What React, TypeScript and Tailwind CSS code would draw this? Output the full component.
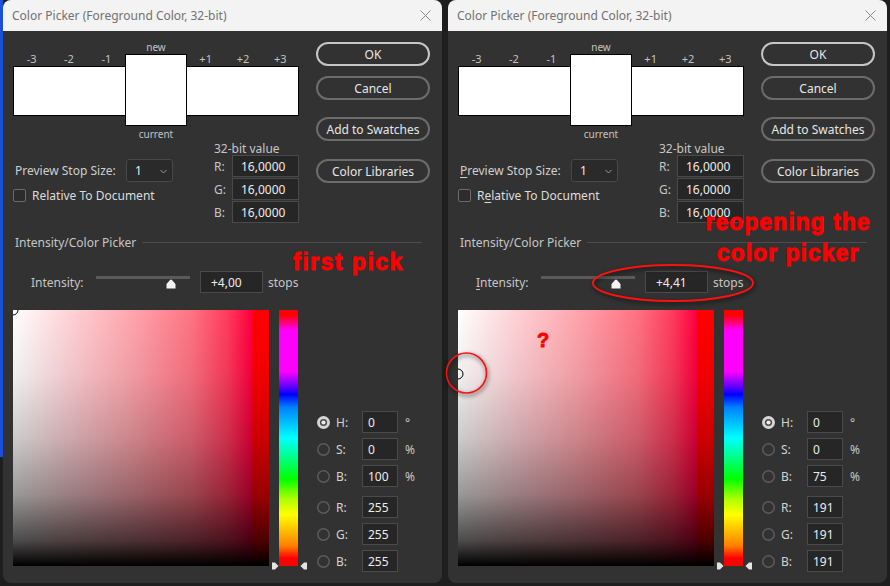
import type { ReactNode } from "react";

type PickerProps = {
  intensity: string;
  brightness: number;
  rgb: string;
  mnemonics?: boolean;
};

const ui = "font-['Noto_Sans',sans-serif]";

function Key({ on, children }: { on?: boolean; children: ReactNode }) {
  if (!on) return <>{children}</>;
  return <span className="underline underline-offset-[2px]">{children}</span>;
}

function ValueBox({ value, className = "" }: { value: string; className?: string }) {
  return (
    <div
      className={`flex h-[22px] items-center border border-[#4a4a4a] bg-[#262626] pl-[5px] pt-[1px] text-[12px] text-[#ececec] ${className}`}
    >
      {value}
    </div>
  );
}

function PillButton({ label, primary, className = "" }: { label: string; primary?: boolean; className?: string }) {
  return (
    <div
      className={`flex h-[24px] items-center justify-center rounded-full border-2 pt-[1px] text-[12px] text-[#e6e6e6] ${
        primary ? "border-[#c6c6c6]" : "border-[#6c6c6c]"
      } ${className}`}
    >
      {label}
    </div>
  );
}

function Radio({ checked }: { checked?: boolean }) {
  return (
    <svg width="13" height="13" viewBox="0 0 13 13" className="shrink-0">
      {checked ? (
        <>
          <circle cx="6.5" cy="6.5" r="6.5" fill="#d6d6d6" />
          <circle cx="6.5" cy="6.5" r="3.6" fill="#4a4a4a" />
          <circle cx="6.5" cy="6.5" r="2.1" fill="#ececec" />
        </>
      ) : (
        <circle cx="6.5" cy="6.5" r="5.75" fill="none" stroke="#5c5c5c" strokeWidth="1.5" />
      )}
    </svg>
  );
}

function Swatch({ side }: { side: "left" | "right" }) {
  const labels = side === "left" ? ["-3", "-2", "-1"] : ["+1", "+2", "+3"];
  return (
    <div className="mt-[12px] w-[112px]">
      <div className="grid h-[14px] grid-cols-3 text-center text-[11px] leading-[14px] text-[#c2c2c2]">
        {labels.map((l) => (
          <span key={l}>{l}</span>
        ))}
      </div>
      <div
        className={`h-[50px] border border-black bg-white ${side === "left" ? "border-r-0" : "border-l-0"}`}
      />
    </div>
  );
}

function ColorPicker({ intensity, brightness, rgb, mnemonics }: PickerProps) {
  const cursorTop = ((100 - brightness) / 100) * 256;
  const rows = [
    { k: "H", v: "0", u: "°", on: true, gap: "mt-0" },
    { k: "S", v: "0", u: "%", gap: "mt-[5px]" },
    { k: "B", v: String(brightness), u: "%", gap: "mt-[5px]" },
    { k: "R", v: rgb, gap: "mt-[9px]" },
    { k: "G", v: rgb, gap: "mt-[5px]" },
    { k: "B", v: rgb, gap: "mt-[5px]" },
  ];

  return (
    <div className="flex h-[583px] w-[439px] flex-col overflow-hidden rounded-[8px] bg-[#323232]">
      {/* window chrome */}
      <div className="flex h-[31px] shrink-0 items-center justify-between bg-[#f3f3f3] pl-[9px] pr-[11px]">
        <span className="text-[12px] text-[#727272]">Color Picker (Foreground Color, 32-bit)</span>
        <svg width="11" height="11" viewBox="0 0 11 11">
          <path d="M0.5 0.5 L10.5 10.5 M10.5 0.5 L0.5 10.5" stroke="#8a8a8a" strokeWidth="1" />
        </svg>
      </div>

      <div className="flex flex-1 flex-col">
        <div className="flex pl-[10px]">
          <div className="w-[286px] pt-[9px]">
            {/* new / current preview strip */}
            <div className="flex items-start">
              <Swatch side="left" />
              <div className="w-[62px] text-center">
                <div className="h-[14px] text-[10px] leading-[14px] text-[#c2c2c2]">new</div>
                <div className="h-[72px] border border-black bg-white" />
                <div className="mt-[1px] h-[14px] text-[10px] leading-[14px] text-[#c2c2c2]">current</div>
              </div>
              <Swatch side="right" />
            </div>

            <div className="flex">
              <div className="w-[199px] pt-[18px]">
                <div className="flex h-[23px] items-center">
                  <span className="w-[113px] pl-[2px] pt-[1px] text-[12px] text-[#cfcfcf]">
                    <Key on={mnemonics}>P</Key>review Stop Size:
                  </span>
                  <div className="flex h-[23px] w-[47px] items-center justify-between rounded-[3px] border border-[#484848] bg-[#2a2a2a] pl-[8px] pr-[5px] pt-[1px] text-[12px] text-[#ececec]">
                    1
                    <svg width="7" height="5" viewBox="0 0 7 5">
                      <path d="M0.5 1 L3.5 4 L6.5 1" fill="none" stroke="#9a9a9a" strokeWidth="1" />
                    </svg>
                  </div>
                </div>
                <div className="mt-[7px] flex h-[13px] items-center">
                  <div className="h-[13px] w-[13px] rounded-[2px] border border-[#6a6a6a] bg-[#2c2c2c]" />
                  <span className="ml-[6px] pt-[1px] text-[12px] text-[#dcdcdc]">
                    R<Key on={mnemonics}>e</Key>lative To Document
                  </span>
                </div>
              </div>

              <div className="w-[87px]">
                <div className="h-[14px] pl-[2px] pt-[1px] text-[12px] leading-[14px] text-[#c6c6c6]">32-bit value</div>
                {["R", "G", "B"].map((c, i) => (
                  <div key={c} className={`flex items-center ${i ? "mt-[1px]" : ""}`}>
                    <span className="w-[20px] pl-[2px] pt-[1px] text-[12px] text-[#c6c6c6]">{c}:</span>
                    <ValueBox value="16,0000" className="w-[67px] pl-[8px]" />
                  </div>
                ))}
              </div>
            </div>
          </div>

          <div className="ml-[17px] flex w-[114px] flex-col pt-[11px]">
            <PillButton label="OK" primary />
            <PillButton label="Cancel" className="mt-[10px]" />
            <PillButton label="Add to Swatches" className="mt-[17px]" />
            <PillButton label="Color Libraries" className="mt-[18px]" />
          </div>
        </div>

        <div className="mt-[12px] flex h-[14px] items-center pl-[12px] pr-[20px]">
          <span className="pt-[1px] text-[12px] text-[#c6c6c6]">Intensity/Color Picker</span>
          <div className="ml-[6px] h-px flex-1 bg-[#4c4c4c]" />
        </div>

        <div className="mt-[22px] flex h-[22px] items-center pl-[28px]">
          <span className="w-[65px] pt-[1px] text-[12px] text-[#c6c6c6]">
            <Key on={mnemonics}>I</Key>ntensity:
          </span>
          <div className="relative h-[22px] w-[94px]">
            <div className="absolute left-0 right-0 top-[5px] h-[3px] bg-[#5a5a5a]" />
            <svg
              width="10"
              height="10"
              viewBox="0 0 10 10"
              className="absolute left-[70px] top-[8px]"
            >
              <path d="M5 0.5 Q5.6 0.5 6.2 1.3 L9.5 5 V9.5 H0.5 V5 L3.8 1.3 Q4.4 0.5 5 0.5 Z" fill="#f2f2f2" />
            </svg>
          </div>
          <ValueBox value={intensity} className="ml-[10px] w-[63px] pl-[10px]" />
          <span className="ml-[5px] pt-[1px] text-[12px] text-[#c6c6c6]">stops</span>
        </div>

        <div className="mt-[17px] flex items-start pl-[10px]">
          {/* saturation / brightness field for hue 0 */}
          <div className="relative h-[256px] w-[256px] overflow-hidden bg-[linear-gradient(to_right,#ffffff_0%,#ffd6da_20%,#ffa6ae_46%,#ff7282_70%,#ff3a5c_84%,#ff0040_93%,#ff0000_94%,#ff0000_100%)]">
            <div className="absolute inset-0 bg-[linear-gradient(to_bottom,#00000000_0%,#0000000f_25%,#00000033_50%,#00000066_72%,#000000b3_90%,#000000_100%)]" />
            <div
              className="absolute left-0 h-[11px] w-[11px] -translate-x-1/2 -translate-y-1/2 rounded-full border border-black"
              style={{ top: cursorTop }}
            />
          </div>

          <div className="relative ml-[10px] h-[256px] w-[19px] bg-[linear-gradient(to_bottom,#ff0000_0%,#ff0000_2%,#ff00ff_8%,#ff00ff_24%,#6000ff_30%,#0000ff_33%,#0080ff_38%,#00ffff_50%,#00ff80_58%,#00ff00_66%,#b0ff00_74%,#ffff00_80%,#ff8000_92%,#ff0000_97%,#ff0000_100%)]">
            <svg width="7" height="8" viewBox="0 0 7 8" className="absolute -left-[7px] bottom-[-4px]">
              <path d="M0 0.5 H3 L6.5 4 L3 7.5 H0 Z" fill="#e4e4e4" />
            </svg>
            <svg width="7" height="8" viewBox="0 0 7 8" className="absolute -right-[9px] bottom-[-4px]">
              <path d="M7 0.5 H4 L0.5 4 L4 7.5 H7 Z" fill="#e4e4e4" />
            </svg>
          </div>

          <div className="ml-[19px] mt-[101px] flex flex-col">
            {rows.map((r, i) => (
              <div key={i} className={`flex h-[22px] items-center ${r.gap}`}>
                <Radio checked={r.on} />
                <span className="ml-[6px] w-[26px] pt-[1px] text-[12px] text-[#d2d2d2]">{r.k}:</span>
                <ValueBox value={r.v} className="w-[36px]" />
                {r.u && <span className="ml-[7px] pt-[1px] text-[12px] text-[#c6c6c6]">{r.u}</span>}
              </div>
            ))}
          </div>
        </div>
      </div>
    </div>
  );
}

export default function App() {
  const note =
    "font-['Liberation_Sans',Arial,sans-serif] font-bold text-[#ff0000] [-webkit-text-stroke:0.9px_#ff0000]";
  return (
    <div className={`relative flex h-[586px] w-[890px] overflow-hidden bg-[#1e1e1e] ${ui}`}>
      <div className="h-full w-[3px] shrink-0 bg-[linear-gradient(to_bottom,#1b4fd8_0%,#1b4fd8_78%,#1e1e1e_78%)]" />
      <ColorPicker intensity="+4,00" brightness={100} rgb="255" />
      <div className="w-[6px] shrink-0" />
      <ColorPicker intensity="+4,41" brightness={75} rgb="191" mnemonics />

      {/* red markup on top of the dialogs */}
      <div className={`absolute left-[293px] top-[249px] text-[23px] leading-[26px] tracking-[1.5px] ${note}`}>
        first pick
      </div>
      <div className={`absolute left-[688px] top-[207px] w-[200px] text-center text-[23px] leading-[31px] tracking-[1px] ${note}`}>
        reopening the
        <br />
        color picker
      </div>
      <svg
        width="172"
        height="48"
        viewBox="0 0 172 48"
        className="absolute left-[587px] top-[260px] drop-shadow-[1px_2px_2px_rgba(0,0,0,0.7)]"
      >
        <ellipse cx="86" cy="23" rx="80" ry="18" fill="none" stroke="#ff1010" strokeWidth="2" />
      </svg>
      <svg
        width="48"
        height="48"
        viewBox="0 0 48 48"
        className="absolute left-[443px] top-[349px] drop-shadow-[1px_2px_2px_rgba(0,0,0,0.7)]"
      >
        <circle cx="23.5" cy="24" r="20" fill="none" stroke="#ff1010" strokeWidth="1.6" />
      </svg>
      <div className={`absolute left-[537px] top-[330px] text-[20px] leading-[20px] ${note}`}>?</div>
    </div>
  );
}
